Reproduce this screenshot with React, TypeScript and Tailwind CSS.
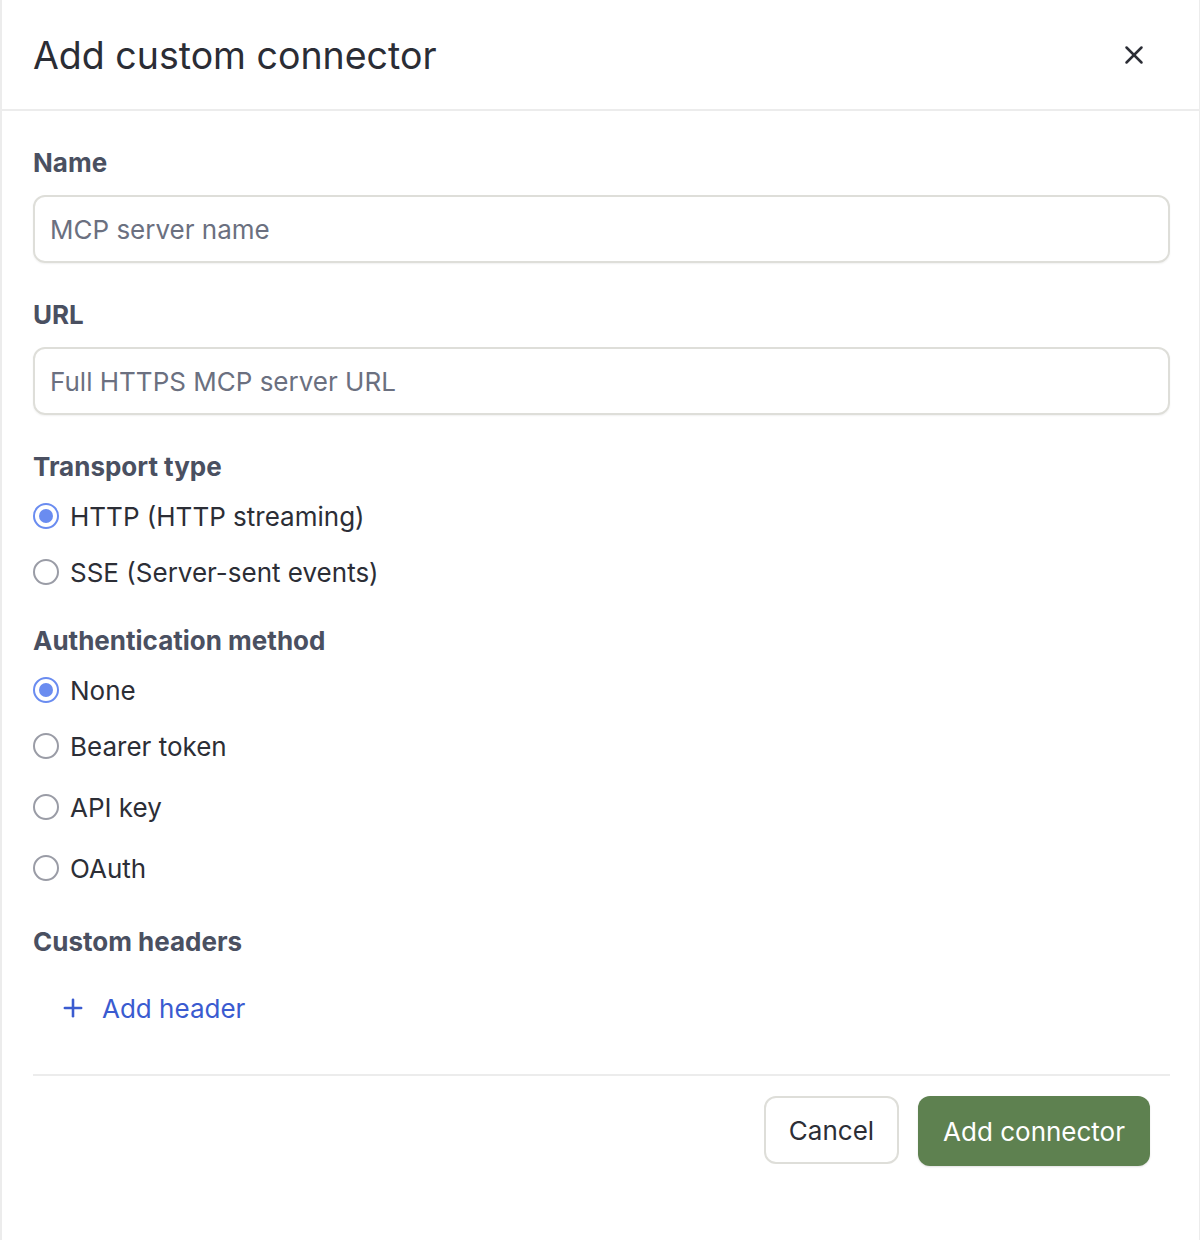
import { X, Plus } from 'lucide-react';

const transport = [
  { label: 'HTTP (HTTP streaming)', checked: true },
  { label: 'SSE (Server-sent events)', checked: false },
];

const auth = [
  { label: 'None', checked: true, mt: 'mt-0' },
  { label: 'Bearer token', checked: false, mt: 'mt-[22px]' },
  { label: 'API key', checked: false, mt: 'mt-[27px]' },
  { label: 'OAuth', checked: false, mt: 'mt-[27px]' },
];

function Radio({ label, checked, className = '' }: { label: string; checked: boolean; className?: string }) {
  return (
    <label className={`flex items-center gap-[11px] h-[34px] ${className}`}>
      <span
        className={`flex items-center justify-center w-[26px] h-[26px] rounded-full border-2 ${
          checked ? 'border-[#6a8cf0]' : 'border-[#9a9ca6]'
        }`}
      >
        {checked && <span className="w-[14px] h-[14px] rounded-full bg-[#6a8cf0]" />}
      </span>
      <span className="text-[26px] text-[#2c2e36]">{label}</span>
    </label>
  );
}

function Field({ label, placeholder }: { label: string; placeholder: string }) {
  return (
    <div className="flex flex-col">
      <div className="text-[26px] font-bold text-[#4a5061] leading-[34px]">{label}</div>
      <div className="mt-[15px] h-[68px] rounded-[12px] border-2 border-[#deded9] shadow-[0_1px_2px_rgba(0,0,0,0.06)] flex items-center px-[15px]">
        <span className="text-[26px] text-[#6b7080]">{placeholder}</span>
      </div>
    </div>
  );
}

export default function App() {
  return (
    <div
      className="w-[1200px] h-[1240px] bg-white border-l-2 border-r border-[#ececec] flex flex-col"
      style={{ fontFamily: 'Inter, "Noto Sans", sans-serif' }}
    >
      <header className="h-[111px] border-b-2 border-[#ececec] flex items-center justify-between pl-[31px] pr-[50px]">
        <h1 className="text-[37.5px] text-[#2b2d35] leading-none pt-[2px]">Add custom connector</h1>
        <X size={30} strokeWidth={2} className="text-[#2c2e36]" />
      </header>

      <div className="flex flex-col px-[31px] pr-[29px] pt-[35px]">
        <Field label="Name" placeholder="MCP server name" />
        <div className="mt-[35px]">
          <Field label="URL" placeholder="Full HTTPS MCP server URL" />
        </div>

        <div className="mt-[35px] text-[26px] font-bold text-[#4a5061] leading-[34px]">Transport type</div>
        <div className="mt-[15px] flex flex-col gap-[22px]">
          {transport.map((t) => (
            <Radio key={t.label} label={t.label} checked={t.checked} />
          ))}
        </div>

        <div className="mt-[35px] text-[26px] font-bold text-[#4a5061] leading-[34px]">Authentication method</div>
        <div className="mt-[15px] flex flex-col">
          {auth.map((a) => (
            <Radio key={a.label} label={a.label} checked={a.checked} className={a.mt} />
          ))}
        </div>

        <div className="mt-[40px] text-[26px] font-bold text-[#4a5061] leading-[34px]">Custom headers</div>
        <button className="mt-[32px] ml-[26px] flex items-center gap-[15px] h-[34px] text-[#3a5bd0]">
          <Plus size={28} strokeWidth={2.2} />
          <span className="text-[26px]">Add header</span>
        </button>

        <div className="mt-[49px] border-t-2 border-[#ececec]" />

        <div className="mt-[20px] flex justify-end gap-[19px] pr-[20px]">
          <button className="h-[68px] px-[23px] rounded-[12px] border-2 border-[#deded9] text-[26px] text-[#2c2e36] bg-white">
            Cancel
          </button>
          <button className="h-[70px] px-[25px] rounded-[12px] bg-[#5e8150] text-[26px] text-white shadow-[0_1px_2px_rgba(0,0,0,0.12)]">
            Add connector
          </button>
        </div>
      </div>
    </div>
  );
}
